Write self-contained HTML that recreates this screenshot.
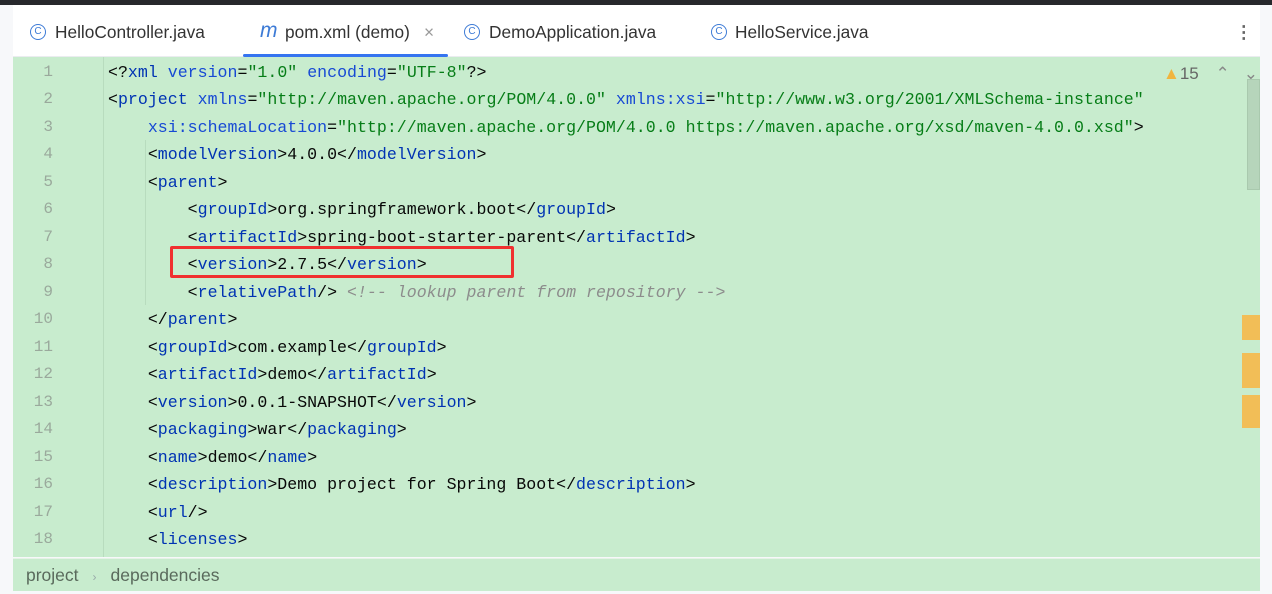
<!DOCTYPE html>
<html><head><style>
body{margin:0;width:1272px;height:594px;overflow:hidden;background:#f7f8fa;position:relative;font-family:"Liberation Sans",sans-serif}
.top{position:absolute;left:0;top:0;width:1272px;height:5px;background:#27282c}
.tabs{position:absolute;left:13px;top:5px;width:1247px;height:51px;background:#fff;border-bottom:1px solid #ebecf0}
.tab{position:absolute;top:17px;font-size:17.3px;color:#333;white-space:nowrap}
.ci{position:absolute;top:1px;width:14px;height:14px;border:1.5px solid #3d7bd6;border-radius:50%;font-size:10px;line-height:14px;text-align:center;color:#3d7bd6}
.ed{position:absolute;left:13px;top:57px;width:1247px;height:500px;background:#c8ecce}
.bc{position:absolute;left:13px;top:558px;width:1247px;height:32px;background:#c8ecce;border-top:1px solid #e6f3e7;font-size:17.5px;color:#5a6a5c;line-height:32px}
.ln{position:absolute;left:15px;width:38px;text-align:right;font-family:"Liberation Mono",monospace;font-size:16px;color:#9aa99c}
.cd{position:absolute;left:108px;font-family:"Liberation Mono",monospace;font-size:16.6px;white-space:pre;color:#080808}
.t{color:#0033b3}.a{color:#174ad4}.s{color:#067d17}.c{color:#8c8c8c;font-style:italic}
</style></head><body>
<div class="top"></div>
<div class="tabs">
<span class="ci" style="left:17px;top:19px">C</span><div class="tab" style="left:42px">HelloController.java</div>
<div class="tab" style="left:247px;top:14px;color:#3d7bd6;font-style:italic;font-size:21px">m</div><div class="tab" style="left:272px">pom.xml (demo)</div><div class="tab" style="left:411px;color:#999">×</div>
<div style="position:absolute;left:230px;top:49px;width:205px;height:3px;background:#3574f0;border-radius:2px"></div>
<span class="ci" style="left:451px;top:19px">C</span><div class="tab" style="left:476px">DemoApplication.java</div>
<span class="ci" style="left:698px;top:19px">C</span><div class="tab" style="left:722px">HelloService.java</div>
<div class="tab" style="left:1222px;color:#666;font-weight:bold">⋮</div>
</div>
<div class="ed"></div>
<div style="position:absolute;left:103px;top:57px;width:1px;height:500px;background:#b8dcbe"></div>
<div style="position:absolute;left:145px;top:140px;width:1px;height:165px;background:#b8dcbe"></div>
<div style="position:absolute;left:1163px;top:64px;font-size:17px;color:#666"><span style="color:#f0b53f">▲</span>15 <span style="margin-left:12px;color:#888">⌃</span><span style="margin-left:14px;color:#888">⌄</span></div>
<div style="position:absolute;left:1247px;top:79px;width:11px;height:109px;background:#b6d5bb;border:1px solid #a9c9ae"></div>
<div style="position:absolute;left:1242px;top:315px;width:18px;height:25px;background:#f2be57"></div>
<div style="position:absolute;left:1242px;top:353px;width:18px;height:35px;background:#f2be57"></div>
<div style="position:absolute;left:1242px;top:395px;width:18px;height:33px;background:#f2be57"></div>
<div style="position:absolute;left:170px;top:246px;width:338px;height:26px;border:3px solid #f03030;border-radius:2px"></div>
<div id="L"></div>
<div class="bc"><span style="margin-left:13px">project</span><span style="margin:0 14px;color:#9aa;font-size:12px">›</span>dependencies</div>
<script>
var L=[
'&lt;?<span class="t">xml</span> <span class="a">version</span>=<span class="s">"1.0"</span> <span class="a">encoding</span>=<span class="s">"UTF-8"</span>?&gt;',
'&lt;<span class="t">project</span> <span class="a">xmlns</span>=<span class="s">"http://maven.apache.org/POM/4.0.0"</span> <span class="a">xmlns:xsi</span>=<span class="s">"http://www.w3.org/2001/XMLSchema-instance"</span>',
'    <span class="a">xsi:schemaLocation</span>=<span class="s">"http://maven.apache.org/POM/4.0.0 https://maven.apache.org/xsd/maven-4.0.0.xsd"</span>&gt;',
'    &lt;<span class="t">modelVersion</span>&gt;4.0.0&lt;/<span class="t">modelVersion</span>&gt;',
'    &lt;<span class="t">parent</span>&gt;',
'        &lt;<span class="t">groupId</span>&gt;org.springframework.boot&lt;/<span class="t">groupId</span>&gt;',
'        &lt;<span class="t">artifactId</span>&gt;spring-boot-starter-parent&lt;/<span class="t">artifactId</span>&gt;',
'        &lt;<span class="t">version</span>&gt;2.7.5&lt;/<span class="t">version</span>&gt;',
'        &lt;<span class="t">relativePath</span>/&gt; <span class="c">&lt;!-- lookup parent from repository --&gt;</span>',
'    &lt;/<span class="t">parent</span>&gt;',
'    &lt;<span class="t">groupId</span>&gt;com.example&lt;/<span class="t">groupId</span>&gt;',
'    &lt;<span class="t">artifactId</span>&gt;demo&lt;/<span class="t">artifactId</span>&gt;',
'    &lt;<span class="t">version</span>&gt;0.0.1-SNAPSHOT&lt;/<span class="t">version</span>&gt;',
'    &lt;<span class="t">packaging</span>&gt;war&lt;/<span class="t">packaging</span>&gt;',
'    &lt;<span class="t">name</span>&gt;demo&lt;/<span class="t">name</span>&gt;',
'    &lt;<span class="t">description</span>&gt;Demo project for Spring Boot&lt;/<span class="t">description</span>&gt;',
'    &lt;<span class="t">url</span>/&gt;',
'    &lt;<span class="t">licenses</span>&gt;'];
var h='';for(var i=0;i<L.length;i++){var y=63+i*27.47;h+='<div class="ln" style="top:'+(y)+'px">'+(i+1)+'</div><div class="cd" style="top:'+y+'px">'+L[i]+'</div>';}
document.getElementById('L').innerHTML=h;
</script>
</body></html>
